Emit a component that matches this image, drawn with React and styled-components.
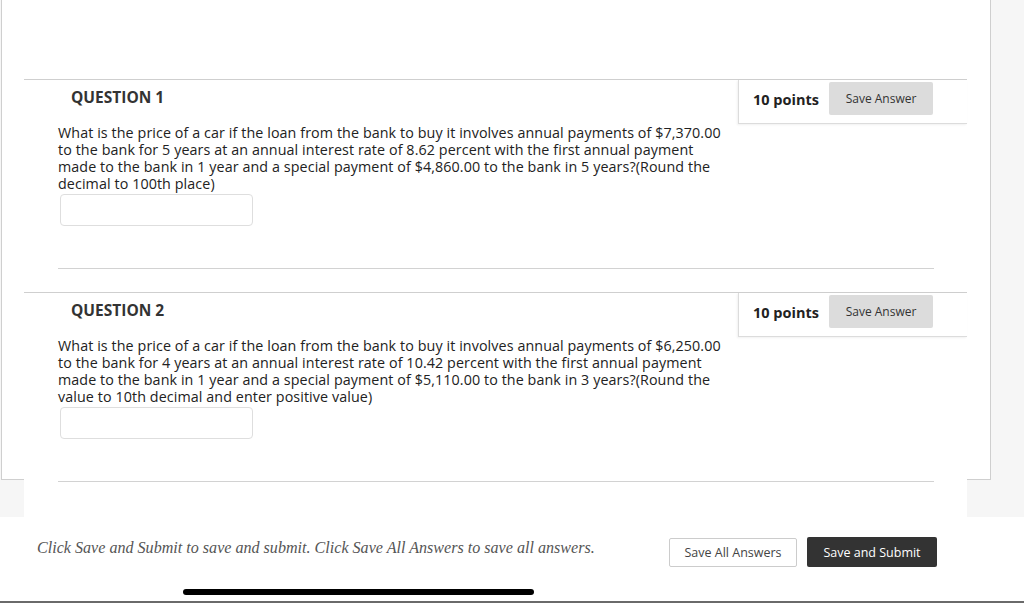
import React from "react";
import styled, { createGlobalStyle } from "styled-components";

const questions = [
  {
    id: 1,
    points: 10,
    text:
      "What is the price of a car if the loan from the bank to buy it involves annual payments of $7,370.00 to the bank for 5 years at an annual interest rate of 8.62 percent with the first annual payment made to the bank in 1 year and a special payment of $4,860.00 to the bank in 5 years?(Round the decimal to 100th place)",
  },
  {
    id: 2,
    points: 10,
    text:
      "What is the price of a car if the loan from the bank to buy it involves annual payments of $6,250.00 to the bank for 4 years at an annual interest rate of 10.42 percent with the first annual payment made to the bank in 1 year and a special payment of $5,110.00 to the bank in 3 years?(Round the value to 10th decimal and enter positive value)",
  },
];

const GlobalStyle = createGlobalStyle`
  html, body {
    margin: 0;
    padding: 0;
    background: #fff;
    font-family: "Open Sans", "Liberation Sans", sans-serif;
    color: #333;
  }
  * { box-sizing: border-box; }
`;

const Page = styled.div`
  width: 1024px;
  height: 603px;
  overflow: hidden;
  display: flex;
  flex-direction: column;
`;

const Backdrop = styled.div`
  height: 517px;
  background: #f6f6f6;
  overflow: hidden;
  flex-shrink: 0;
`;

const Frame = styled.div`
  width: 990px;
  height: 480px;
  margin-left: 1px;
  padding: 79px 0 0 22px;
  background: #fff;
  border: 1px solid #cfcfcf;
  border-top: none;
`;

const QuestionList = styled.div`
  width: 943px;
  height: 438px;
  background: #fff;
`;

const QuestionBlock = styled.div`
  border-top: 1px solid #cfcfcf;
`;

const Header = styled.div`
  display: flex;
  justify-content: space-between;
  height: 44px;
`;

const Title = styled.h3`
  margin: 0;
  padding: 7px 0 0 47px;
  font-size: 15.5px;
  line-height: 20px;
  font-weight: 700;
  color: #333;
`;

const PointsBox = styled.div`
  width: 229px;
  height: 44px;
  display: flex;
  align-items: center;
  justify-content: space-between;
  padding: 3px 34px 7px 14px;
  border-left: 1px solid #dcdcdc;
  border-bottom: 1px solid #dcdcdc;
  box-shadow: -1px 1px 2px rgba(0, 0, 0, 0.06);
`;

const Points = styled.span`
  font-size: 14.5px;
  font-weight: 700;
  color: #222;
`;

const SaveAnswer = styled.button`
  width: 104px;
  height: 33px;
  border: none;
  border-radius: 2px;
  background: #dcdcdc;
  color: #333;
  font-family: inherit;
  font-size: 12px;
  padding: 0;
  margin-top: -2px;
`;

const Body = styled.div`
  padding-left: 34px;
`;

const QuestionText = styled.p`
  margin: 0;
  width: 668px;
  font-size: 14.3px;
  letter-spacing: 0.09px;
  line-height: 17px;
  color: #222;
`;

const AnswerInput = styled.input`
  display: block;
  width: 193px;
  height: 32px;
  margin: 2px 0 0 2px;
  border: 1px solid #dedede;
  border-radius: 4px;
  background: #fff;
`;

const Separator = styled.hr`
  margin: 42px 33px 23px 0;
  border: none;
  border-top: 1px solid #d2d2d2;
`;

const Footer = styled.div`
  position: relative;
  height: 86px;
  display: flex;
  align-items: flex-start;
  padding: 20px 87px 0 37px;
  border-bottom: 2px solid #6a6a6a;
`;

const FooterNote = styled.p`
  margin: 1px 0 0;
  flex: 1;
  font-family: "Liberation Serif", "DejaVu Serif", serif;
  font-style: italic;
  font-size: 16.1px;
  line-height: 20px;
  color: #555;
`;

const FooterButton = styled.button`
  height: ${(p) => (p.$primary ? "30px" : "29px")};
  margin-top: ${(p) => (p.$primary ? "0" : "1px")};
  padding: 0;
  width: ${(p) => (p.$primary ? "130px" : "128px")};
  margin-left: ${(p) => (p.$primary ? "10px" : "0")};
  border: ${(p) => (p.$primary ? "none" : "1px solid #cccccc")};
  border-radius: 2px;
  background: ${(p) => (p.$primary ? "#333" : "#fff")};
  color: ${(p) => (p.$primary ? "#fff" : "#444")};
  font-family: inherit;
  font-size: 12.5px;
`;

const ScrollPill = styled.div`
  position: absolute;
  left: 183px;
  top: 72px;
  width: 351px;
  height: 6px;
  border-radius: 3px;
  background: #000;
`;

const Question = ({ question }) => (
  <QuestionBlock>
    <Header>
      <Title>QUESTION {question.id}</Title>
      <PointsBox>
        <Points>{question.points} points</Points>
        <SaveAnswer>Save Answer</SaveAnswer>
      </PointsBox>
    </Header>
    <Body>
      <QuestionText>{question.text}</QuestionText>
      <AnswerInput type="text" />
      <Separator />
    </Body>
  </QuestionBlock>
);

export default function App() {
  return (
    <Page>
      <GlobalStyle />
      <Backdrop>
        <Frame>
          <QuestionList>
            {questions.map((q) => (
              <Question key={q.id} question={q} />
            ))}
          </QuestionList>
        </Frame>
      </Backdrop>
      <Footer>
        <FooterNote>
          Click Save and Submit to save and submit. Click Save All Answers to
          save all answers.
        </FooterNote>
        <FooterButton>Save All Answers</FooterButton>
        <FooterButton $primary>Save and Submit</FooterButton>
        <ScrollPill />
      </Footer>
    </Page>
  );
}
